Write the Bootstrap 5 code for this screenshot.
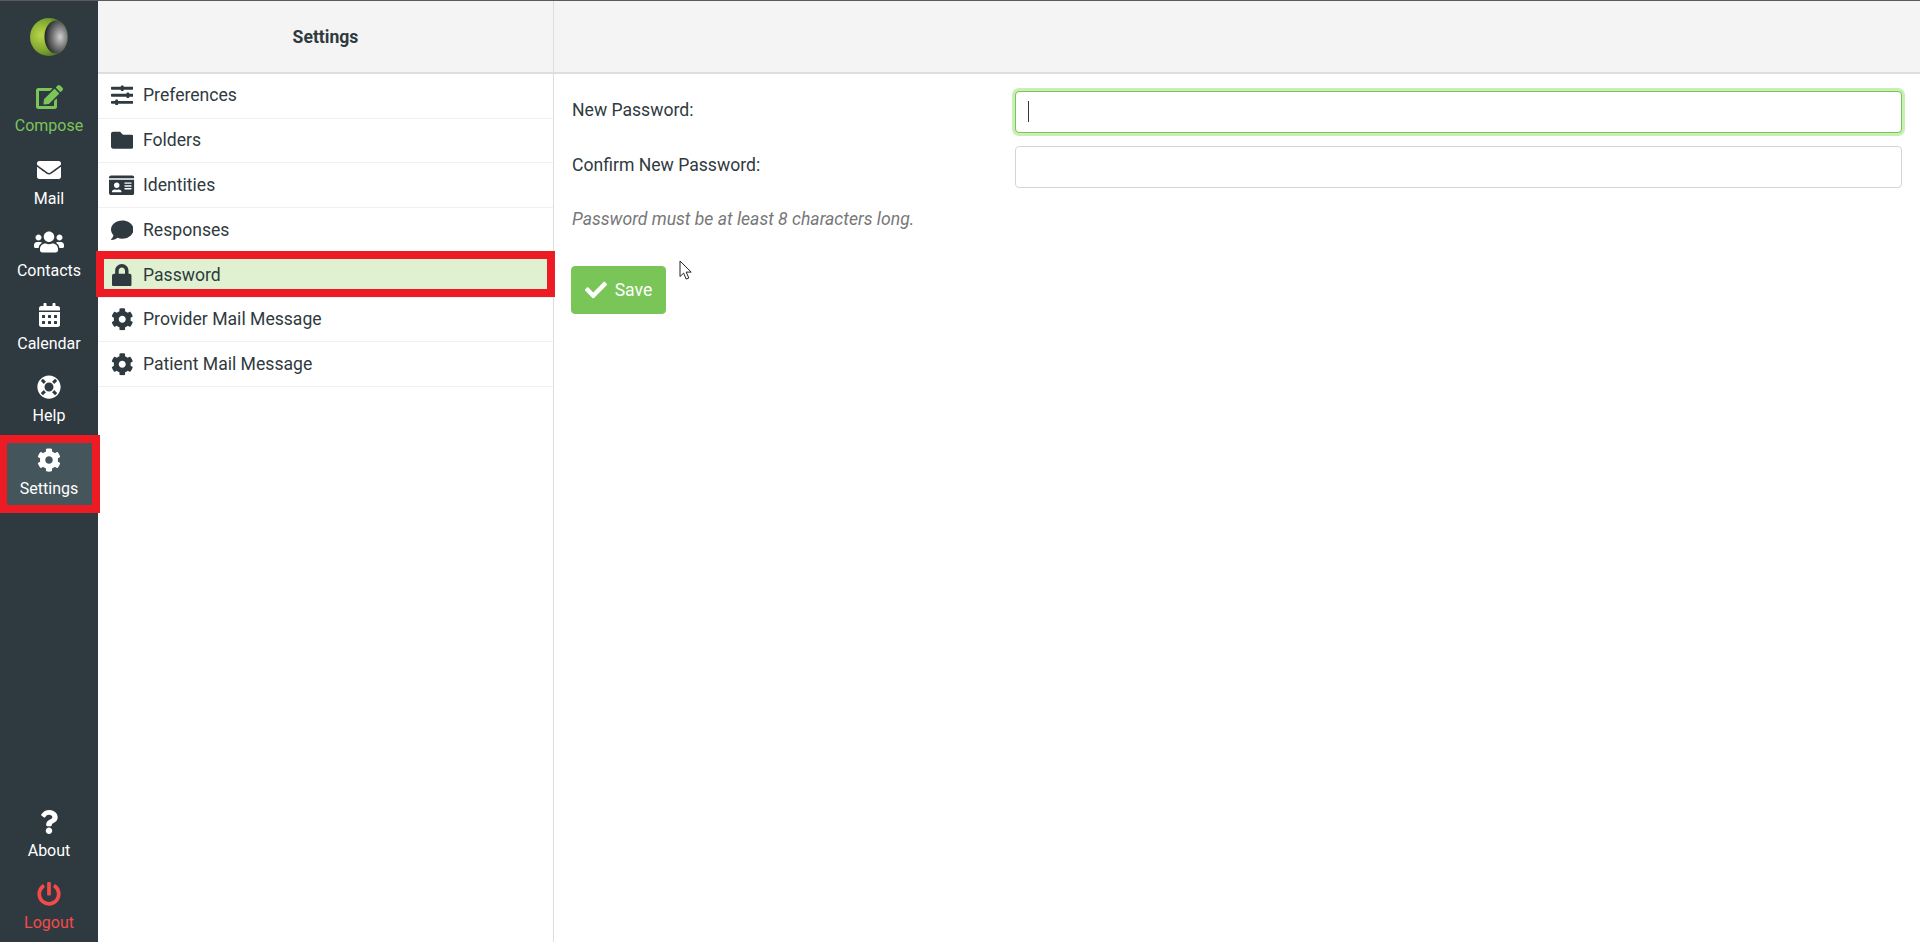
<!doctype html>
<html lang="en">
<head>
<meta charset="UTF-8" />
<title>Settings</title>
<link rel="stylesheet" href="https://cdn.jsdelivr.net/npm/bootstrap@5.3.3/dist/css/bootstrap.min.css" />
<style>
    html, body { height: 100%; }
    body {
        font-family: Roboto, "Liberation Sans", sans-serif;
        color: #2f3a40;
        background: #fff;
        border-top: 1px solid #5a5a5a;
        overflow: hidden;
    }
    svg.ico { fill: currentColor; display: block; }

    /* left icon rail */
    .rail { width: 98px; background: #2f3a40; flex: none; }
    .rail-logo { height: 71.5px; padding-top: 1px; }
    .rail-item {
        height: 72.6px;
        padding-top: 12.5px;
        color: #fff;
        font-size: 16px;
        line-height: 22px;
        text-decoration: none;
        position: relative;
    }
    .rail-item svg { height: 24px; margin-bottom: 6px; }
    .rail-item.compose { color: #7ac558; }
    .rail-item.logout { color: #f44a4a; }
    .rail-item.current { background: #45555c; }
    .rail-item.about { margin-bottom: -1px; }

    .anno { position: absolute; border: 8px solid #ed1c24; pointer-events: none; z-index: 5; }
    .rail-item .anno { inset: -0.5px -2px -5px 0; border-width: 8px 8px 8px 7px; }
    .list-group-item .anno { inset: -2px -2px 0 -2px; }

    /* settings list */
    .side { width: 456px; flex: none; border-right: 1px solid #dcdfe0; }
    .pane-head { height: 73px; background: #f4f4f4; border-bottom: 2px solid #dcdfe0; flex: none; }
    .pane-title { font-size: 17.6px; font-weight: 700; color: #2f3a40; padding-top: 1px; }
    .side .list-group { margin-top: -0.3px; }
    .side .list-group-item {
        height: 44.8px;
        padding: 0 0 0 11px;
        color: #2f3a40;
        font-size: 17.6px;
        border-color: #f0f0f0;
        display: flex;
        align-items: center;
        position: relative;
    }
    .side .list-group-item:last-child { border-bottom: 1px solid #f0f0f0; }
    .side .list-group-item.current { background: #dff1d0; }
    .list-ico { width: 26px; margin-right: 8px; display: flex; justify-content: center; }
    .list-ico svg { height: 22.5px; }

    /* form */
    .form-pane { padding: 17px 18px 0 18px; position: relative; }
    .form-line { margin-bottom: 13px; }
    .form-line label { width: 443px; font-size: 17.6px; flex: none; padding-top: 6px; color: #2f3a40; margin: 0; }
    .form-control.pw {
        height: 42px;
        border-radius: 4px;
        border-color: #d3d6d9;
        position: relative;
    }
    .form-control.pw.on { border-color: #7ac558; box-shadow: 0 0 0 3px #c9efb4; }
    .caret-wrap { position: relative; flex: 1; }
    .caret { position: absolute; left: 13px; top: 10px; width: 1px; height: 21px; background: #2f3a40; }
    .hint { font-size: 17.6px; font-style: italic; color: #777; margin: 18px 0 34px; }
    .btn-save {
        background: #7ac558;
        border-color: #7ac558;
        color: #fff;
        font-size: 17.6px;
        height: 48px;
        width: 95px;
        border-radius: 4px;
        padding: 0 0 1px;
        margin-left: -1px;
    }
    .btn-save svg { height: 22px; }
    .pointer { position: absolute; left: 125px; top: 186px; }
</style>
</head>
<body class="d-flex">
<svg width="0" height="0" class="position-absolute">
    <defs>
        <radialGradient id="logoGreen" cx="30%" cy="45%" r="75%">
            <stop offset="0" stop-color="#bdd84e" />
            <stop offset="0.55" stop-color="#7da52e" />
            <stop offset="1" stop-color="#38601a" />
        </radialGradient>
        <radialGradient id="logoGrey" cx="68%" cy="50%" r="65%">
            <stop offset="0" stop-color="#cfcfcf" />
            <stop offset="0.55" stop-color="#6f6f6f" />
            <stop offset="1" stop-color="#25282a" />
        </radialGradient>
        <symbol id="i-edit" viewBox="0 0 576 512"><path d="M402.6 83.2l90.2 90.2c3.8 3.8 3.8 10 0 13.8L274.4 405.6l-92.8 10.3c-12.4 1.4-22.9-9.1-21.5-21.5l10.3-92.8L388.8 83.2c3.8-3.8 10-3.8 13.8 0zm162-22.9l-48.8-48.8c-15.2-15.2-39.9-15.2-55.2 0l-35.4 35.4c-3.8 3.8-3.8 10 0 13.8l90.2 90.2c3.8 3.8 10 3.8 13.8 0l35.4-35.4c15.2-15.3 15.2-40 0-55.2zM384 346.2V448H64V128h229.8c3.2 0 6.2-1.3 8.5-3.5l40-40c7.6-7.6 2.2-20.5-8.5-20.5H48C21.5 64 0 85.5 0 112v352c0 26.5 21.5 48 48 48h352c26.5 0 48-21.5 48-48V306.2c0-10.7-12.9-16-20.5-8.5l-40 40c-2.2 2.3-3.5 5.3-3.5 8.5z"/></symbol>
        <symbol id="i-mail" viewBox="0 0 512 512"><path d="M502.3 190.8c3.9-3.1 9.7-.2 9.7 4.7V400c0 26.5-21.5 48-48 48H48c-26.5 0-48-21.5-48-48V195.6c0-5 5.7-7.8 9.7-4.7 22.4 17.4 52.1 39.5 154.1 113.6 21.1 15.4 56.7 47.8 92.2 47.6 35.7.3 72-32.8 92.3-47.6 102-74.1 131.6-96.3 154-113.7zM256 320c23.2.4 56.6-29.2 73.4-41.4 132.7-96.3 142.8-104.7 173.4-128.7 5.8-4.5 9.2-11.5 9.2-18.9v-19c0-26.5-21.5-48-48-48H48C21.5 64 0 85.5 0 112v19c0 7.4 3.4 14.3 9.2 18.9 30.6 23.9 40.7 32.4 173.4 128.7 16.8 12.2 50.2 41.8 73.4 41.4z"/></symbol>
        <symbol id="i-users" viewBox="0 0 640 512"><path d="M96 224c35.3 0 64-28.7 64-64s-28.7-64-64-64-64 28.7-64 64 28.7 64 64 64zm448 0c35.3 0 64-28.7 64-64s-28.7-64-64-64-64 28.7-64 64 28.7 64 64 64zm32 32h-64c-17.6 0-33.5 7.1-45.1 18.6 40.3 22.1 68.9 62 75.1 109.4h66c17.7 0 32-14.3 32-32v-32c0-35.3-28.7-64-64-64zm-256 0c61.9 0 112-50.1 112-112S381.9 32 320 32 208 82.1 208 144s50.1 112 112 112zm76.8 32h-8.3c-20.8 10-43.9 16-68.5 16s-47.6-6-68.5-16h-8.3C179.6 288 128 339.6 128 403.2V432c0 26.5 21.5 48 48 48h288c26.5 0 48-21.5 48-48v-28.8c0-63.6-51.6-115.2-115.2-115.2zm-223.7-13.4C161.5 263.1 145.6 256 128 256H64c-35.3 0-64 28.7-64 64v32c0 17.7 14.3 32 32 32h65.9c6.3-47.4 34.9-87.3 75.2-109.4z"/></symbol>
        <symbol id="i-cal" viewBox="0 0 448 512"><path d="M0 464c0 26.5 21.5 48 48 48h352c26.5 0 48-21.5 48-48V192H0v272zm320-196c0-6.6 5.4-12 12-12h40c6.6 0 12 5.4 12 12v40c0 6.6-5.4 12-12 12h-40c-6.6 0-12-5.4-12-12v-40zm0 128c0-6.6 5.4-12 12-12h40c6.6 0 12 5.4 12 12v40c0 6.6-5.4 12-12 12h-40c-6.6 0-12-5.4-12-12v-40zM192 268c0-6.6 5.4-12 12-12h40c6.6 0 12 5.4 12 12v40c0 6.6-5.4 12-12 12h-40c-6.6 0-12-5.4-12-12v-40zm0 128c0-6.6 5.4-12 12-12h40c6.6 0 12 5.4 12 12v40c0 6.6-5.4 12-12 12h-40c-6.6 0-12-5.4-12-12v-40zM64 268c0-6.6 5.4-12 12-12h40c6.6 0 12 5.4 12 12v40c0 6.6-5.4 12-12 12H76c-6.6 0-12-5.4-12-12v-40zm0 128c0-6.6 5.4-12 12-12h40c6.6 0 12 5.4 12 12v40c0 6.6-5.4 12-12 12H76c-6.6 0-12-5.4-12-12v-40zM400 64h-48V16c0-8.8-7.2-16-16-16h-32c-8.8 0-16 7.2-16 16v48H160V16c0-8.8-7.2-16-16-16h-32c-8.8 0-16 7.2-16 16v48H48C21.5 64 0 85.5 0 112v48h448v-48c0-26.5-21.5-48-48-48z"/></symbol>
        <symbol id="i-help" viewBox="0 0 512 512"><path d="M256 8C119 8 8 119 8 256s111 248 248 248 248-111 248-248S393 8 256 8zm173.696 119.559l-63.399 63.399c-10.987-18.559-26.67-34.252-45.255-45.255l63.399-63.399a218.396 218.396 0 0 1 45.255 45.255zM256 352c-53.019 0-96-42.981-96-96s42.981-96 96-96 96 42.981 96 96-42.981 96-96 96zM127.559 82.304l63.399 63.399c-18.559 10.987-34.252 26.67-45.255 45.255l-63.399-63.399a218.372 218.372 0 0 1 45.255-45.255zM82.304 384.441l63.399-63.399c10.987 18.559 26.67 34.252 45.255 45.255l-63.399 63.399a218.396 218.396 0 0 1-45.255-45.255zm302.137 45.255l-63.399-63.399c18.559-10.987 34.252-26.67 45.255-45.255l63.399 63.399a218.403 218.403 0 0 1-45.255 45.255z"/></symbol>
        <symbol id="i-cog" viewBox="0 0 512 512"><path d="M487.4 315.7l-42.6-24.6c4.3-23.2 4.3-47 0-70.2l42.6-24.6c4.9-2.8 7.1-8.6 5.5-14-11.1-35.6-30-67.8-54.7-94.6-3.8-4.1-10-5.1-14.8-2.3L380.8 110c-17.9-15.4-38.5-27.3-60.8-35.1V25.8c0-5.6-3.9-10.5-9.4-11.7-36.7-8.2-74.3-7.8-109.2 0-5.5 1.2-9.4 6.1-9.4 11.7V75c-22.2 7.9-42.8 19.8-60.8 35.1L88.7 85.5c-4.9-2.8-11-1.9-14.8 2.3-24.7 26.7-43.6 58.9-54.7 94.6-1.7 5.4.6 11.2 5.5 14L67.3 221c-4.3 23.2-4.3 47 0 70.2l-42.6 24.6c-4.9 2.8-7.1 8.6-5.5 14 11.1 35.6 30 67.8 54.7 94.6 3.8 4.1 10 5.1 14.8 2.3l42.6-24.6c17.9 15.4 38.5 27.3 60.8 35.1v49.2c0 5.6 3.9 10.5 9.4 11.7 36.7 8.2 74.3 7.8 109.2 0 5.5-1.2 9.4-6.1 9.4-11.7v-49.2c22.2-7.9 42.8-19.8 60.8-35.1l42.6 24.6c4.9 2.8 11 1.9 14.8-2.3 24.7-26.7 43.6-58.9 54.7-94.6 1.5-5.5-.7-11.3-5.6-14.1zM256 336c-44.1 0-80-35.9-80-80s35.9-80 80-80 80 35.9 80 80-35.9 80-80 80z"/></symbol>
        <symbol id="i-question" viewBox="0 0 384 512"><path d="M202.021 0C122.202 0 70.503 32.703 29.914 91.026c-7.363 10.58-5.093 25.086 5.178 32.874l43.138 32.709c10.373 7.865 25.132 6.026 33.253-4.148 25.049-31.381 43.63-49.449 82.757-49.449 30.764 0 68.816 19.799 68.816 49.631 0 22.552-18.617 34.134-48.993 51.164-35.423 19.86-82.299 44.576-82.299 106.405V320c0 13.255 10.745 24 24 24h72.471c13.255 0 24-10.745 24-24v-5.773c0-42.86 125.268-44.645 125.268-160.627C377.504 66.256 286.902 0 202.021 0zM192 373.459c-38.196 0-69.271 31.075-69.271 69.271 0 38.195 31.075 69.27 69.271 69.27s69.271-31.075 69.271-69.271-31.075-69.27-69.271-69.27z"/></symbol>
        <symbol id="i-power" viewBox="0 0 512 512"><path d="M400 54.1c63 45 104 118.6 104 201.9 0 136.8-110.8 247.7-247.5 248C120 504.3 8.2 393 8 256.4 7.9 173.1 48.9 99.3 111.8 54.2c11.7-8.3 28-4.8 35 7.7L162.6 90c5.9 10.5 3.1 23.8-6.6 31-41.5 30.8-68 79.6-68 134.9-.1 92.3 74.5 168.1 168 168.1 91.6 0 168.6-74.2 168-169.1-.3-51.8-24.7-101.8-68.1-134-9.7-7.2-12.4-20.5-6.5-30.9l15.8-28.1c7-12.4 23.2-16.1 34.8-7.8zM296 264V24c0-13.3-10.7-24-24-24h-32c-13.3 0-24 10.7-24 24v240c0 13.3 10.7 24 24 24h32c13.3 0 24-10.7 24-24z"/></symbol>
        <symbol id="i-sliders" viewBox="0 0 512 512"><path d="M496 384H160v-16c0-8.8-7.2-16-16-16h-32c-8.8 0-16 7.2-16 16v16H16c-8.8 0-16 7.2-16 16v32c0 8.8 7.2 16 16 16h80v16c0 8.8 7.2 16 16 16h32c8.8 0 16-7.2 16-16v-16h336c8.8 0 16-7.2 16-16v-32c0-8.8-7.2-16-16-16zm0-160h-80v-16c0-8.8-7.2-16-16-16h-32c-8.8 0-16 7.2-16 16v16H16c-8.8 0-16 7.2-16 16v32c0 8.8 7.2 16 16 16h336v16c0 8.8 7.2 16 16 16h32c8.8 0 16-7.2 16-16v-16h80c8.8 0 16-7.2 16-16v-32c0-8.8-7.2-16-16-16zm0-160H288V48c0-8.8-7.2-16-16-16h-32c-8.8 0-16 7.2-16 16v16H16C7.2 64 0 71.2 0 80v32c0 8.8 7.2 16 16 16h208v16c0 8.8 7.2 16 16 16h32c8.8 0 16-7.2 16-16v-16h208c8.8 0 16-7.2 16-16V80c0-8.8-7.2-16-16-16z"/></symbol>
        <symbol id="i-folder" viewBox="0 0 512 512"><path d="M464 128H272l-64-64H48C21.49 64 0 85.49 0 112v288c0 26.51 21.49 48 48 48h416c26.51 0 48-21.49 48-48V176c0-26.51-21.49-48-48-48z"/></symbol>
        <symbol id="i-idcard" viewBox="0 0 576 512"><path d="M528 32H48C21.5 32 0 53.5 0 80v16h576V80c0-26.5-21.5-48-48-48zM0 432c0 26.5 21.5 48 48 48h480c26.5 0 48-21.5 48-48V128H0v304zm352-232c0-4.4 3.6-8 8-8h144c4.4 0 8 3.6 8 8v16c0 4.4-3.6 8-8 8H360c-4.4 0-8-3.6-8-8v-16zm0 64c0-4.4 3.6-8 8-8h144c4.4 0 8 3.6 8 8v16c0 4.4-3.6 8-8 8H360c-4.4 0-8-3.6-8-8v-16zm0 64c0-4.4 3.6-8 8-8h144c4.4 0 8 3.6 8 8v16c0 4.4-3.6 8-8 8H360c-4.4 0-8-3.6-8-8v-16zM176 192c35.3 0 64 28.7 64 64s-28.7 64-64 64-64-28.7-64-64 28.7-64 64-64zM67.1 396.2C75.5 370.5 99.6 352 128 352h8.2c12.3 5.1 25.7 8 39.8 8s27.6-2.9 39.8-8h8.2c28.4 0 52.5 18.5 60.9 44.2 3.2 9.9-5.2 19.8-15.6 19.8H82.7c-10.4 0-18.8-10-15.6-19.8z"/></symbol>
        <symbol id="i-comment" viewBox="0 0 512 512"><path d="M256 32C114.6 32 0 125.1 0 240c0 49.6 21.4 95 57 130.7C44.5 421.1 2.7 466 2.2 466.5c-2.2 2.3-2.8 5.7-1.5 8.7S4.8 480 8 480c66.3 0 116-31.8 140.6-51.4 32.7 12.3 69 19.4 107.4 19.4 141.4 0 256-93.1 256-208S397.4 32 256 32z"/></symbol>
        <symbol id="i-lock" viewBox="0 0 448 512"><path d="M400 224h-24v-72C376 68.2 307.8 0 224 0S72 68.2 72 152v72H48c-26.5 0-48 21.5-48 48v192c0 26.5 21.5 48 48 48h352c26.5 0 48-21.5 48-48V272c0-26.5-21.5-48-48-48zm-104 0H152v-72c0-39.7 32.3-72 72-72s72 32.3 72 72v72z"/></symbol>
        <symbol id="i-check" viewBox="0 0 512 512"><path d="M173.898 439.404l-166.4-166.4c-9.997-9.997-9.997-26.206 0-36.204l36.203-36.204c9.997-9.998 26.207-9.998 36.204 0L192 312.69 432.095 72.596c9.997-9.997 26.207-9.997 36.204 0l36.203 36.204c9.997 9.997 9.997 26.206 0 36.204l-294.4 294.401c-9.998 9.997-26.207 9.997-36.204-.001z"/></symbol>
    </defs>
</svg>

<!-- rail -->
<nav class="rail d-flex flex-column align-items-stretch">
    <div class="rail-logo d-flex align-items-center justify-content-center">
        <svg width="40" height="40" viewBox="0 0 40 40">
            <circle cx="20" cy="20" r="19" fill="url(#logoGreen)" />
            <ellipse cx="27" cy="20" rx="11.5" ry="16.5" fill="url(#logoGrey)" />
        </svg>
    </div>
    <a class="rail-item compose d-flex flex-column align-items-center" href="#"><svg class="ico" viewBox="0 0 576 512"><use href="#i-edit" /></svg>Compose</a>
    <a class="rail-item d-flex flex-column align-items-center" href="#"><svg class="ico" viewBox="0 0 512 512"><use href="#i-mail" /></svg>Mail</a>
    <a class="rail-item d-flex flex-column align-items-center" href="#"><svg class="ico" viewBox="0 0 640 512"><use href="#i-users" /></svg>Contacts</a>
    <a class="rail-item d-flex flex-column align-items-center" href="#"><svg class="ico" viewBox="0 0 448 512"><use href="#i-cal" /></svg>Calendar</a>
    <a class="rail-item d-flex flex-column align-items-center" href="#"><svg class="ico" viewBox="0 0 512 512"><use href="#i-help" /></svg>Help</a>
    <a class="rail-item current d-flex flex-column align-items-center" href="#"><svg class="ico" viewBox="0 0 512 512"><use href="#i-cog" /></svg>Settings<span class="anno"></span></a>
    <a class="rail-item about d-flex flex-column align-items-center mt-auto" href="#"><svg class="ico" viewBox="0 0 384 512"><use href="#i-question" /></svg>About</a>
    <a class="rail-item logout d-flex flex-column align-items-center" href="#"><svg class="ico" viewBox="0 0 512 512"><use href="#i-power" /></svg>Logout</a>
</nav>

<!-- settings sections -->
<section class="side d-flex flex-column">
    <div class="pane-head d-flex align-items-center justify-content-center"><span class="pane-title">Settings</span></div>
    <div class="list-group list-group-flush">
        <a class="list-group-item" href="#"><span class="list-ico"><svg class="ico" viewBox="0 0 512 512"><use href="#i-sliders" /></svg></span>Preferences</a>
        <a class="list-group-item" href="#"><span class="list-ico"><svg class="ico" viewBox="0 0 512 512"><use href="#i-folder" /></svg></span>Folders</a>
        <a class="list-group-item" href="#"><span class="list-ico"><svg class="ico" viewBox="0 0 576 512"><use href="#i-idcard" /></svg></span>Identities</a>
        <a class="list-group-item" href="#"><span class="list-ico"><svg class="ico" viewBox="0 0 512 512"><use href="#i-comment" /></svg></span>Responses</a>
        <a class="list-group-item current" href="#"><span class="list-ico"><svg class="ico" viewBox="0 0 448 512"><use href="#i-lock" /></svg></span>Password<span class="anno"></span></a>
        <a class="list-group-item" href="#"><span class="list-ico"><svg class="ico" viewBox="0 0 512 512"><use href="#i-cog" /></svg></span>Provider Mail Message</a>
        <a class="list-group-item" href="#"><span class="list-ico"><svg class="ico" viewBox="0 0 512 512"><use href="#i-cog" /></svg></span>Patient Mail Message</a>
    </div>
</section>

<!-- password form -->
<main class="flex-grow-1 d-flex flex-column">
    <div class="pane-head"></div>
    <div class="form-pane flex-grow-1">
        <div class="form-line d-flex">
            <label for="newPw">New Password:</label>
            <div class="caret-wrap">
                <input id="newPw" type="password" class="form-control pw on" />
                <span class="caret"></span>
            </div>
        </div>
        <div class="form-line d-flex">
            <label for="confirmPw">Confirm New Password:</label>
            <input id="confirmPw" type="password" class="form-control pw" />
        </div>
        <p class="hint">Password must be at least 8 characters long.</p>
        <button type="button" class="btn btn-save d-inline-flex align-items-center justify-content-center gap-2">
            <svg class="ico" viewBox="0 0 512 512"><use href="#i-check" /></svg>Save
        </button>
        <svg class="pointer" width="14" height="20" viewBox="0 0 14 20">
            <path d="M1 1v15.5l3.6-3.4 2.6 6 2.6-1.1-2.6-5.9h5z" fill="#fff" stroke="#222" stroke-width="1" />
        </svg>
    </div>
</main>
</body>
</html>
